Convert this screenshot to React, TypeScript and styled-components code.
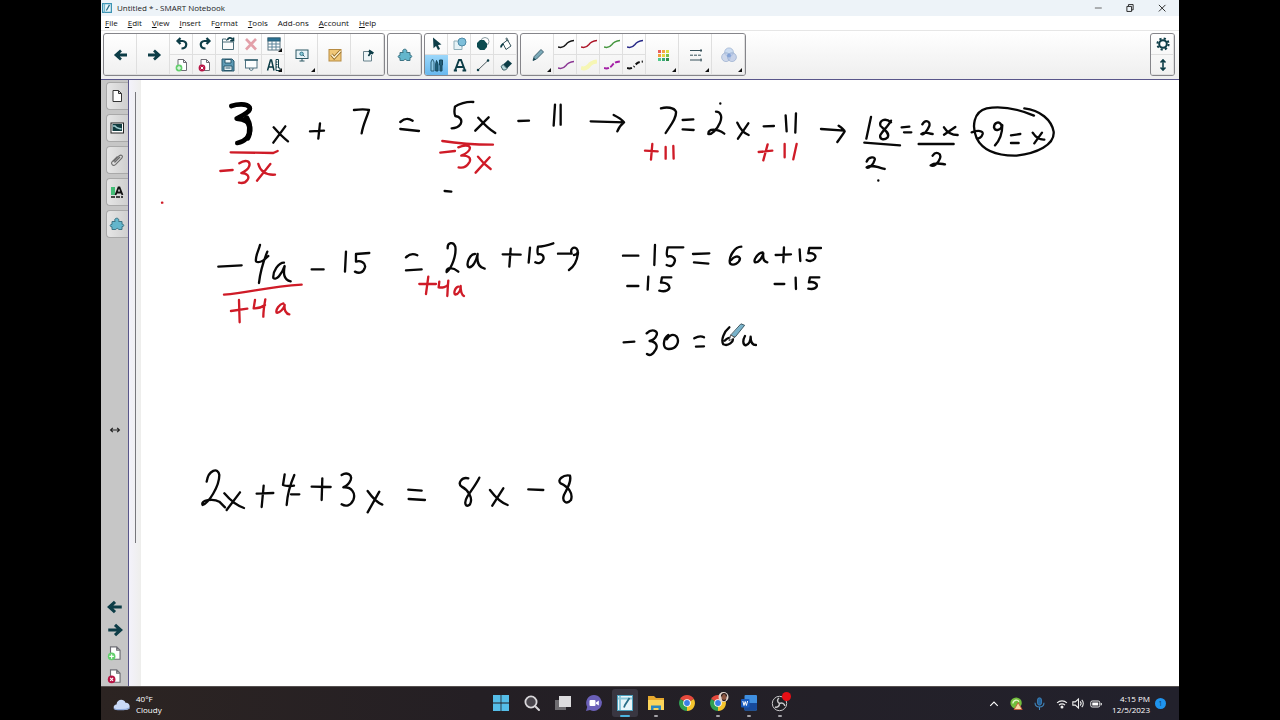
import React from 'react';
import styled, { createGlobalStyle } from 'styled-components';

const GlobalStyle = createGlobalStyle`
  *, *::before, *::after { box-sizing: border-box; }
  body { margin: 0; background: #000; font-family: "Open Sans", "Noto Sans", sans-serif; }
  button { font: inherit; color: inherit; margin: 0; padding: 0; border: 0; background: none; }
`;

const teal = '#0d3d47';

const Desktop = styled.div`
  display: flex;
  flex-direction: column;
  min-height: 100vh;
  margin: 0 101px;
  background: #fff;
`;

/* ---------- window chrome ---------- */

const TitleBar = styled.header`
  display: flex;
  align-items: center;
  height: 16px;
  padding: 0 1px;
  gap: 5px;
  background: #edf3f8;
`;

const Title = styled.h1`
  flex: 1;
  margin: 0;
  font-size: 8px;
  line-height: 16px;
  font-weight: 400;
  color: #1c1c1c;
`;

const WindowControls = styled.div`
  display: flex;
`;

const WindowButton = styled.button`
  display: flex;
  align-items: center;
  justify-content: center;
  width: 32px;
  height: 14px;
`;

const MenuBar = styled.nav`
  display: flex;
  height: 14px;
  padding: 0 4px;
  gap: 10px;
`;

const MenuItem = styled.button`
  font-size: 8px;
  line-height: 14px;
  color: #111;
  u { text-underline-offset: 1px; }
`;

/* ---------- toolbar ---------- */

const Toolbar = styled.div`
  display: flex;
  align-items: flex-start;
  gap: 2px;
  height: 50px;
  padding: 2px 4px 0 2px;
  border-top: 1px solid #e6e6e6;
  border-bottom: 1px solid #59568a;
  background: linear-gradient(#ffffff, #eeeeee);
`;

const ToolGroup = styled.div<{ $end?: boolean }>`
  display: flex;
  height: 43px;
  margin-left: ${p => (p.$end ? 'auto' : '0')};
  border: 1px solid #85858a;
  border-radius: 3px;
  background: linear-gradient(#ffffff, #f0f0f0);
  overflow: hidden;
`;

const SmallTools = styled.div<{ $columns: number }>`
  display: grid;
  grid-template-columns: repeat(${p => p.$columns}, 23px);
  grid-auto-rows: 1fr;
`;

const ToolButton = styled.button<{ $large?: boolean; $active?: boolean }>`
  position: relative;
  display: flex;
  align-items: center;
  justify-content: center;
  width: ${p => (p.$large ? '33px' : '23px')};
  background: ${p => (p.$active ? 'linear-gradient(#9bd7fa, #69b9ee)' : 'transparent')};
  box-shadow: ${p => (p.$active ? 'none' : 'inset -1px -1px #dfdfdf')};
`;

const Corner = styled.span`
  position: absolute;
  right: 3px;
  bottom: 3px;
  border: 2px solid #111;
  border-top-color: transparent;
  border-left-color: transparent;
`;

/* ---------- workspace ---------- */

const Workspace = styled.main`
  display: flex;
  flex: 1;
`;

const Sidebar = styled.aside`
  display: flex;
  flex-direction: column;
  width: 28px;
  padding: 2px 0 0;
  border-right: 1px solid #59568a;
  background: #c6c6c6;
`;

const Tabs = styled.div`
  display: flex;
  flex-direction: column;
  gap: 4px;
  padding-left: 5px;
`;

const Tab = styled.button`
  display: flex;
  align-items: center;
  justify-content: center;
  height: 28px;
  padding-right: 2px;
  border: 1px solid #a9a9a9;
  border-right: 0;
  border-radius: 4px 0 0 4px;
  background: linear-gradient(90deg, #e6e6e6, #cfcfcf);
`;

const ResizeArea = styled.div`
  display: flex;
  flex: 1;
  align-items: center;
  justify-content: center;
  padding-top: 25px;
`;

const PageNav = styled.div`
  display: flex;
  flex-direction: column;
  gap: 3px;
`;

const NavButton = styled.button`
  display: flex;
  align-items: center;
  justify-content: center;
  height: 20px;
`;

const PageEdge = styled.div`
  width: 12px;
  padding: 12px 5px 0 6px;
  background: linear-gradient(90deg, #f3f2fb, #eeeeec);
`;

const EdgeLine = styled.div`
  height: 76%;
  background: #77777c;
`;

const Page = styled.section`
  flex: 1;
  min-width: 0;
  background: #fff;
`;

const Ink = styled.svg`
  display: block;
  width: 100%;
  fill: none;
  stroke-linecap: round;
  stroke-linejoin: round;
`;

/* ---------- taskbar ---------- */

const Taskbar = styled.footer`
  display: grid;
  grid-template-columns: 1fr auto 1fr;
  height: 34px;
  color: #fff;
  border-top: 1px solid #55504f;
  background: linear-gradient(90deg, #2c2422, #241f24 35%, #22212c);
`;

const Weather = styled.button`
  display: flex;
  align-items: center;
  justify-self: start;
  gap: 4px;
  padding-left: 11px;
  text-align: left;
`;

const TwoLines = styled.span`
  display: flex;
  flex-direction: column;
  font-size: 8px;
  line-height: 11px;
`;

const Apps = styled.div`
  display: flex;
  gap: 5px;
`;

const AppButton = styled.button<{ $state?: 'open' | 'active' }>`
  position: relative;
  display: flex;
  align-items: center;
  justify-content: center;
  width: 26px;
  height: 28px;
  margin-top: 2px;
  border-radius: 3px;
  background: ${p => (p.$state === 'active' ? '#393641' : 'transparent')};
  &::after {
    content: "";
    position: absolute;
    bottom: 0;
    width: ${p => (p.$state === 'active' ? '10px' : '4px')};
    height: ${p => (p.$state ? '2px' : '0')};
    border-radius: 1px;
    background: ${p => (p.$state === 'active' ? '#4cb4e0' : '#a5a3a8')};
  }
`;

const Tray = styled.div`
  display: flex;
  align-items: center;
  justify-content: flex-end;
  padding-right: 13px;
`;

const TrayButton = styled.button<{ $narrow?: boolean }>`
  display: flex;
  align-items: center;
  justify-content: center;
  width: ${p => (p.$narrow ? '17px' : '23px')};
  height: 24px;
`;

const QuickSettings = styled.div`
  display: flex;
  margin-left: 2px;
`;

const Clock = styled.button`
  width: 46px;
  text-align: right;
`;

const Badge = styled.span`
  width: 11px;
  height: 11px;
  margin-left: 5px;
  border-radius: 50%;
  font-size: 7px;
  line-height: 11px;
  text-align: center;
  color: #0c3a66;
  background: #1f94ee;
`;

/* ---------- icons ---------- */

type IconProps = { size?: number; children: React.ReactNode };
const Icon = ({ size = 16, children }: IconProps) => (
  <svg width={size} height={size} viewBox="0 0 16 16" fill="none" stroke={teal} aria-hidden="true">
    {children}
  </svg>
);

const ArrowShape = ({ right }: { right?: boolean }) => (
  <path
    d={right ? 'M2 8H12M8 3.5L13 8L8 12.5' : 'M14 8H4M8 3.5L3 8L8 12.5'}
    strokeWidth="2.8"
  />
);

const pageOutline = 'M4 2.5H9.5L12.5 5.5V13.5H4ZM9.5 2.5V5.5H12.5';
const puzzle =
  'M3 5.5H6.2C5 3.6 6.2 2.2 7.8 2.2S10.4 3.6 9.6 5.5H13V8.3C15 7.6 15.6 11 13 10.6V13.5H9.7C9.6 12 7 12 6.8 13.5H3V10.8C.6 11.4.6 7.8 3 8.4Z';

const icons: Record<string, React.ReactNode> = {
  back: <ArrowShape />,
  forward: <ArrowShape right />,
  undo: <path d="M6.5 2L3.5 5L6.5 8M4 5H8.5C13.8 5 13.5 12.5 7.5 12.5" strokeWidth="2.2" />,
  redo: <path d="M9.5 2L12.5 5L9.5 8M12 5H7.5C2.2 5 2.5 12.5 8.5 12.5" strokeWidth="2.2" />,
  open: (
    <>
      <path d="M2.5 13.5V3H6L7 5M2.5 6H13.5V13.5H2.5" stroke="#4d6f7a" />
      <path d="M7.5 4C8 1.5 11 1 12.5 3.5M13.5 1.5V4.8H10.2" strokeWidth="1.6" />
    </>
  ),
  del: <path d="M3 3L13 13.5M13 3L3 13.5" stroke="#e3a0a9" strokeWidth="2.6" />,
  table: (
    <>
      <rect x="2" y="2" width="12" height="12" fill="#fff" stroke="#5a7480" />
      <rect x="2" y="2" width="12" height="3" fill="#2c7396" stroke="#2c6177" />
      <path d="M2 8H14M2 11H14M6 5V14M10 5V14" stroke="#5d8499" />
    </>
  ),
  addPage: (
    <>
      <path d={pageOutline} fill="#fff" stroke="#6d6d74" />
      <circle cx="5" cy="11" r="3.4" fill="#63cf6d" stroke="none" />
      <path d="M5 9V13M3 11H7" stroke="#fff" />
    </>
  ),
  removePage: (
    <>
      <path d={pageOutline} fill="#fff" stroke="#6d6d74" />
      <circle cx="5" cy="11" r="3.4" fill="#b91545" stroke="none" />
      <path d="M3.7 9.7L6.3 12.3M6.3 9.7L3.7 12.3" stroke="#fff" />
    </>
  ),
  save: (
    <>
      <path d="M2 2H12L14 4V14H2Z" fill="#5d9ab5" stroke="#28586c" />
      <path d="M5 2.5H11V6H5ZM4 9H12V13.5H4Z" fill="#e9f3f7" stroke="#28586c" />
      <path d="M5.5 11H10.5" stroke="#28586c" />
    </>
  ),
  shade: (
    <>
      <rect x="2.5" y="3" width="11.5" height="8" fill="#fbfdfe" stroke="#507382" />
      <path d="M1.5 3H15" stroke="#35616f" strokeWidth="1.6" />
      <path d="M6.5 11V12.5L8.2 13.5L10 12.5V11" stroke="#507382" />
    </>
  ),
  measure: (
    <>
      <path d="M1.5 13.5L4.5 3H5.5L8 13.5M3 10H7" strokeWidth="1.5" />
      <path d="M10 2.5H12.5V11H14V13.5H10ZM10 5H11.5M10 7.5H11.5M10 10H11.5" fill="#fff" />
    </>
  ),
  screen: (
    <>
      <rect x="2" y="3" width="12" height="8.5" fill="#e7f3f7" stroke="#2d5965" />
      <circle cx="7.6" cy="6.8" r="1.7" fill="#8ccbda" stroke="#34778a" />
      <path d="M9 8L10.5 9.5M8 11.5V14M5.5 14H10.5" stroke="#2d5965" />
    </>
  ),
  check: (
    <>
      <rect x="2" y="2.5" width="12" height="11.5" fill="#f0c777" stroke="#b78b42" />
      <path d="M4.5 7.5L7.2 10.8L13.5 4" stroke="#8c6420" strokeWidth="3" />
      <path d="M4.5 7.5L7.2 10.8L13.5 4" stroke="#fff3d2" strokeWidth="1.4" />
    </>
  ),
  popout: (
    <>
      <path d="M9 4.5H3.5V14H11.5V8" fill="#eef6f8" stroke="#66808a" />
      <path d="M9.5 2.5L14 5.5L12.5 7.5L11 7L9 9.5L7.8 8.4L9.3 6L8.3 4.6Z" fill={teal} stroke="none" />
    </>
  ),
  addon: <path d={puzzle} fill="#63b6cc" stroke="#3f7585" />,
  select: <path d="M4 1.5L12.5 8.5L9 9L11 13L9 14L7 10L4.5 12.3Z" fill={teal} stroke="none" />,
  shapes: (
    <>
      <path d="M2 5H10V13.5H2Z" fill="#e5f2f6" stroke="#90aeb8" />
      <circle cx="10" cy="6" r="4" fill="#7ebfda" stroke="#4e8ba7" />
    </>
  ),
  polygon: (
    <>
      <circle cx="10" cy="5.5" r="4" fill="#fff" stroke="#8a9da3" />
      <path d="M5 4H9L12 7.5V11L9.5 14H5L2 11V7Z" fill="#0b4b50" stroke="none" />
    </>
  ),
  fill: (
    <>
      <path d="M5 7.5L9.5 4L13 10L8 13.5ZM9 5C7 1.5 9 0 10.2 5.5" fill="#fff" stroke="#34535b" />
      <path d="M5 7C2.5 8.5 1.5 10.8 3 12C4.5 11 4.3 9 6 8.5" fill={teal} stroke="none" />
    </>
  ),
  pens: (
    <>
      <path d="M2 14V5L3.5 2L5 5V14Z" fill="#8cc8e6" stroke="#2c6079" />
      <path d="M6.7 14V7L7.5 3.5L9 7V14Z" fill="#1d6482" stroke="#17465a" />
      <path d="M11 14V8H10.5V3H13.5V8H13V14Z" fill="#235f78" stroke="#17465a" />
    </>
  ),
  textTool: <path d="M3 13.5L7 3H9L13 13.5M5 10H11M1.8 13.5H5M10.5 13.5H14.2" strokeWidth="1.9" />,
  line: (
    <>
      <path d="M3 13L13 3.5" stroke="#4f5c61" />
      <path d="M3 13H3.1M13 3.5H13.1" strokeWidth="2.5" strokeLinecap="round" />
    </>
  ),
  eraser: (
    <>
      <path d="M3 9.5L10 3L14 6.5L7.5 13H5Z" fill={teal} stroke="none" />
      <path d="M3 9.5L5.2 7.5L9 11.5L7.5 13H5Z" fill="#b9d9dd" stroke="#46676d" />
    </>
  ),
  pencil: (
    <>
      <path d="M3 13.5L4.2 9.5L11 2.5L13.5 5L6.5 12Z" fill="#7aa9b8" stroke="#416472" />
      <path d="M3 13.5L3.8 10.8L5.8 12.6Z" fill={teal} stroke="none" />
    </>
  ),
  palette: (
    <g stroke="none">
      {['#e8605c', '#f5a242', '#d9dc45', '#f0a03c', '#e8d33e', '#7cc04a', '#52c98a', '#38a877', '#2f8f4c'].map(
        (c, i) => (
          <rect key={c} x={3 + (i % 3) * 4} y={3 + Math.floor(i / 3) * 4} width="3" height="3" fill={c} />
        ),
      )}
    </g>
  ),
  lines: (
    <>
      <path d="M2 3.5H14M2 13H14" stroke="#36515a" />
      <path d="M2 8.2H14" stroke="#36515a" strokeDasharray="3 1" />
      <path d="M13 2V5M13 11.5V14.5" stroke="#36515a" />
    </>
  ),
  blend: (
    <g stroke="#8fa6c9" fillOpacity=".7" strokeWidth=".6">
      <circle cx="8" cy="5.3" r="4.4" fill="#b9d0ee" />
      <circle cx="5" cy="10.2" r="4.4" fill="#bccbe5" />
      <circle cx="11" cy="10.2" r="4.4" fill="#b3c3e4" />
      <circle cx="8" cy="8.5" r="2" fill="#7398d4" stroke="none" />
    </g>
  ),
  gear: (
    <>
      <circle cx="8" cy="8" r="3.8" strokeWidth="2" />
      <circle cx="8" cy="8" r="5.6" strokeWidth="2" strokeDasharray="2.2 2.2" />
    </>
  ),
  upDown: <path d="M8 3V13M5.5 5.5L8 3L10.5 5.5M5.5 10.5L8 13L10.5 10.5" strokeWidth="1.6" />,
  leftRight: <path d="M3 8H13M5.5 5.5L3 8L5.5 10.5M10.5 5.5L13 8L10.5 10.5" stroke="#222" strokeWidth="1.4" />,
  pageTab: <path d={pageOutline} fill="#fff" stroke="#333" />,
  gallery: (
    <>
      <rect x="2" y="3" width="12.5" height="10" fill="#fff" stroke="#222" />
      <rect x="3.5" y="4" width="9.5" height="7" fill="#103b3f" stroke="none" />
      <path d="M4 6H6C8 9 10 8 12.5 9" stroke="#9cc9cd" strokeWidth="1.4" />
    </>
  ),
  clip: (
    <path
      d="M4.5 9.5L10.3 3.7C12.5 2 14.5 4.5 12.8 6.2L6.5 12.6C3.8 14.6 1.4 11.5 3.2 9.6L8.5 4.5M5.5 10.5L11 5"
      stroke="#6c6c6c"
      strokeWidth="1.1"
    />
  ),
  textTab: (
    <>
      <path d="M2 3H6V11H2Z" fill="#43bd76" stroke="none" />
      <path d="M6.5 11L9.5 3.5H10.5L13.5 11M8 8.5H12" stroke="#111" strokeWidth="1.8" />
      <path d="M2 13H14" stroke="#111" strokeWidth="1.4" strokeDasharray="4 1" />
    </>
  ),
};

const inkSwatches = [
  { label: 'Black pen', color: '#161616' },
  { label: 'Red pen', color: '#ad1629' },
  { label: 'Green pen', color: '#46963f' },
  { label: 'Blue pen', color: '#272987' },
  { label: 'Purple pen', color: '#8b3794' },
  { label: 'Yellow highlighter', color: '#f6f6b4', width: 4 },
  { label: 'Magenta dashed pen', color: '#a41ea6', width: 2, dash: '5 1.5' },
  { label: 'Black dashed pen', color: '#111', width: 2, dash: '5 2 1 2' },
];

type ToolProps = { icon: string; label: string; large?: boolean; active?: boolean; menu?: boolean };
const Tool = ({ icon, label, large, active, menu }: ToolProps) => (
  <ToolButton type="button" aria-label={label} $large={large} $active={active}>
    <Icon>{icons[icon]}</Icon>
    {menu && <Corner />}
  </ToolButton>
);

const fileTools: ToolProps[] = [
  { icon: 'undo', label: 'Undo' },
  { icon: 'redo', label: 'Redo' },
  { icon: 'open', label: 'Open' },
  { icon: 'del', label: 'Delete' },
  { icon: 'table', label: 'Insert table', menu: true },
  { icon: 'addPage', label: 'Add page' },
  { icon: 'removePage', label: 'Delete page' },
  { icon: 'save', label: 'Save' },
  { icon: 'shade', label: 'Screen shade' },
  { icon: 'measure', label: 'Measurement tools', menu: true },
];

const drawTools: ToolProps[] = [
  { icon: 'select', label: 'Select' },
  { icon: 'shapes', label: 'Shapes' },
  { icon: 'polygon', label: 'Regular polygons' },
  { icon: 'fill', label: 'Fill' },
  { icon: 'pens', label: 'Pens', active: true },
  { icon: 'textTool', label: 'Text' },
  { icon: 'line', label: 'Lines' },
  { icon: 'eraser', label: 'Eraser' },
];

const menus = [
  ['', 'F', 'ile'],
  ['', 'E', 'dit'],
  ['', 'V', 'iew'],
  ['', 'I', 'nsert'],
  ['F', 'o', 'rmat'],
  ['', 'T', 'ools'],
  ['Add-ons', '', ''],
  ['', 'A', 'ccount'],
  ['', 'H', 'elp'],
];

/* ---------- pen strokes on the page ---------- */

type Board = { x: number; y: number; black: string; red?: string };

/* Stroke coordinates are thirds of a pixel, measured from each board's corner. */
const boards: Board[] = [
  {
    x: 150,
    y: 90,
    black: `M371 112C385 128 398 142 414 154M406 109L370 158
      M480 124L522 122M510 100L505 146
      M612 60C630 58 648 58 657 60C652 80 640 100 635 130
      M751 96C765 84 775 84 788 92M751 117L807 123
      M970 36C950 34 925 42 915 50C913 60 912 70 916 78C930 80 938 90 932 102C925 112 915 115 905 115
      M985 83C1000 100 1018 118 1036 129M1016 82L976 122
      M884 303L904 305
      M205 530L275 526
      M330 465C325 485 315 500 318 514C328 522 345 508 355 498M352 485C340 515 330 550 327 579
      M402 518C385 518 368 545 370 564C378 572 395 555 404 528C400 548 400 570 422 574
      M485 538L521 538M588 485L585 545
      M658 489L618 492L618 515C632 510 648 520 645 532C640 548 628 552 615 545
      M768 502C780 490 790 490 802 496M768 541L815 538
      M893 475C892 458 910 453 916 470C920 495 905 535 890 546C888 530 910 532 925 545
      M975 492C960 492 948 520 955 531C968 536 980 510 983 492C980 515 985 532 1004 536`,
    red: `M242 187L370 189L383 183
      M211 243L248 240
      M268 220C285 208 302 212 298 228C294 240 282 246 274 249C292 250 300 260 292 270C285 280 275 280 267 278
      M325 222C330 240 345 256 375 254M361 222L321 272
      M877 153C920 160 970 164 1029 164
      M871 188L915 183
      M925 172C940 165 958 165 960 173C960 185 945 192 934 197C955 195 965 205 958 217C950 230 938 235 926 232
      M984 200C995 215 1010 228 1022 237M1019 202L977 248
      M36 338L37 338
      M222 614C300 608 350 590 455 584
      M243 663L292 656M267 630L269 697
      M315 630L311 655C325 656 338 650 345 645M346 628C343 645 340 660 340 680
      M400 640C388 642 376 660 380 668C390 670 402 655 404 645C402 660 408 672 418 673
      M808 582L858 582M835 560L828 612
      M868 575L866 592C878 594 890 590 893 585M895 572C893 590 893 605 892 618
      M925 590C915 592 910 610 916 614C926 612 932 600 932 588C932 605 936 615 942 618`,
  },
  {
    x: 500,
    y: 90,
    black: `M55 93L87 92M165 44L161 107M182 44L182 104
      M272 94L372 97M341 75C355 82 365 88 372 97C362 105 356 112 352 124
      M483 55C500 50 522 52 528 65C530 85 512 105 497 129
      M548 90L580 88M548 118L581 120
      M648 65C662 65 668 80 660 98C650 120 635 135 625 132C625 115 650 115 673 131M661 41L661 40
      M712 98C720 115 732 130 746 135M745 100L714 146
      M791 109L822 108M857 76L860 124M888 70L886 128
      M8 493L62 494M32 476L28 530
      M90 473L86 518
      M160 460C145 465 130 470 114 470C112 480 112 488 114 493C125 490 133 498 130 508C125 520 115 522 106 517
      M174 491L215 491C210 478 220 468 230 476C238 485 230 495 222 495M234 488C232 510 222 530 207 540
      M369 497L415 497M465 465L463 525
      M550 472L503 472C500 485 498 495 503 500C515 495 528 505 524 515C520 530 510 530 500 525
      M579 492L628 490M582 517L625 521
      M724 470C705 470 685 500 690 520C700 530 720 518 720 505C716 495 700 500 694 510
      M788 487C772 490 760 510 765 517C778 518 788 500 790 490C788 505 792 515 802 517
      M827 495L873 493M852 472L850 517M899 478L901 513
      M963 474L928 474L925 490C940 488 950 495 945 505C938 515 930 515 920 510
      M382 588L415 588M445 560L443 599
      M514 562L486 562L483 578C498 576 510 585 508 595C502 605 490 605 478 602
      M824 582L853 582M887 563L888 597
      M958 562L930 562L927 577C940 574 954 580 950 590C945 598 935 598 925 596
      M371 757L403 755
      M440 730C455 715 475 722 470 735C465 750 455 752 449 753C470 755 475 770 465 782C458 795 450 798 441 792
      M505 735C490 745 485 775 505 777C530 778 540 755 530 740C520 730 508 735 500 748
      M583 745C595 738 605 738 612 742M588 770L612 769
      M688 712C672 725 662 750 670 763C685 770 702 755 698 745C690 740 680 745 674 752
      M735 738C728 750 728 764 737 766C748 762 752 750 752 740C752 755 756 765 768 765`,
    red: `M435 182L473 184M457 162L453 209M497 171L497 206M520 168L521 206
      M776 186L817 182M803 163L790 211M854 162L854 202M890 162L880 208`,
  },
  {
    x: 810,
    y: 90,
    black: `M33 117L103 122M86 107C95 113 102 118 104 124C98 134 90 145 82 156
      M183 81L169 146
      M243 97C225 82 205 92 212 108C225 120 240 130 233 142C222 152 208 148 211 135C220 120 235 108 243 92
      M163 158L270 166
      M170 215C175 200 198 198 194 210C190 225 175 237 170 232C180 222 205 232 224 237M205 271L205 272
      M275 112L298 110M282 127L304 127
      M337 103C345 88 362 92 358 108C352 122 340 138 334 132C345 122 355 132 368 132
      M402 112C410 125 425 135 443 135M436 111L402 134
      M326 162L431 162
      M368 197C378 182 395 190 390 205C385 220 370 232 362 226C375 216 395 222 405 223
      M485 127C505 120 520 122 518 132C515 142 507 146 503 145
      M575 108C570 90 552 98 552 112C556 125 572 122 577 105C577 130 570 150 555 166
      M603 136L631 132M603 159L626 159
      M668 128C678 143 688 150 703 149M696 128L673 160
      M672 77C620 55 570 48 530 55C490 65 485 110 500 145C520 185 570 198 620 197C680 190 735 165 731 125C725 90 690 60 643 55`,
  },
  {
    x: 190,
    y: 455,
    black: `M50 80C55 45 85 35 88 60C88 95 55 145 38 150C30 135 70 130 88 140L105 157
      M103 115C120 135 140 152 162 159M150 112L110 165
      M200 116L250 114M221 92L215 156
      M284 58L279 90C290 95 300 93 312 92M313 60C300 90 292 120 290 150M303 118L328 118
      M365 95L422 96M397 70L395 135
      M455 60C470 50 488 58 482 75C475 92 465 95 460 97C485 95 498 115 490 135C482 152 468 156 455 148
      M533 108C545 125 560 142 577 149M568 110L533 172
      M655 104L695 107M656 132L705 135
      M835 70C815 65 802 85 815 95C835 105 850 130 840 148C828 160 820 145 832 125C845 105 860 85 868 68
      M900 105C915 125 930 142 953 150M940 100L907 152
      M1015 103L1060 105
      M1140 62C1120 58 1100 75 1112 85C1135 95 1150 115 1143 135C1130 150 1115 140 1122 120C1132 100 1145 80 1140 62`,
  },
];

const Handwriting = () => (
  <Ink viewBox="141 80 1038 606" preserveAspectRatio="xMinYMin meet" role="img" aria-label="Handwritten equations">
    {boards.map(b => (
      <g key={`${b.x}-${b.y}`} transform={`translate(${b.x} ${b.y}) scale(.3333)`} strokeWidth="7">
        <path d={b.black} stroke="#080808" />
        {b.red && <path d={b.red} stroke="#cf1b27" />}
      </g>
    ))}
    <g transform="translate(150 90) scale(.3333)" stroke="#000">
      <path d="M244 48C262 42 290 40 299 52C304 64 280 75 260 86C285 88 300 95 300 115C302 138 285 155 262 159" strokeWidth="14" />
      <path d="M290 84C300 100 303 125 293 144" strokeWidth="16" />
    </g>
    <g transform="translate(500 90) scale(.3333)" strokeWidth="3">
      <path d="M724 702L734 706L705 742L693 736Z" fill="#78b2ca" stroke="#3d5964" />
      <path d="M693 736L705 742L688 752Z" fill="#fff" stroke="#555" />
    </g>
  </Ink>
);

/* ---------- taskbar pictures ---------- */

const Chrome = () => (
  <g stroke="none">
    <path d="M8 8L1.1 4A8 8 0 0 1 14.9 4Z" fill="#e5493c" />
    <path d="M8 8L14.9 4A8 8 0 0 1 8 16Z" fill="#f5c52d" />
    <path d="M8 8V16A8 8 0 0 1 1.1 4Z" fill="#31a052" />
    <circle cx="8" cy="8" r="3.8" fill="#fff" />
    <circle cx="8" cy="8" r="2.9" fill="#3b7fe8" />
  </g>
);

const apps: { label: string; state?: 'open' | 'active'; art: React.ReactNode }[] = [
  {
    label: 'Start',
    art: <path d="M0 0H7.6V7.6H0ZM8.4 0H16V7.6H8.4ZM0 8.4H7.6V16H0ZM8.4 8.4H16V16H8.4Z" fill="#55bde8" stroke="none" />,
  },
  {
    label: 'Search',
    art: (
      <>
        <circle cx="7" cy="7" r="5.6" fill="#49454c" stroke="#d9d7da" strokeWidth="1.8" />
        <path d="M11.2 11.2L15 15" stroke="#d9d7da" strokeWidth="2" strokeLinecap="round" />
      </>
    ),
  },
  {
    label: 'Task view',
    art: (
      <g stroke="none">
        <rect x="0" y="5" width="11" height="10" fill="#6e6c70" />
        <rect x="4" y="1" width="12" height="11" fill="#dddcde" />
      </g>
    ),
  },
  {
    label: 'Chat',
    art: (
      <g stroke="none">
        <path d="M8 0A8 8 0 1 1 4 15L0 16L1.2 12A8 8 0 0 1 8 0Z" fill="#6b60b8" />
        <rect x="3.5" y="5" width="6" height="6" rx="1" fill="#fff" />
        <path d="M10 7.5L12.8 5.5V10.5L10 8.7Z" fill="#fff" />
      </g>
    ),
  },
  {
    label: 'SMART Notebook',
    state: 'active',
    art: (
      <>
        <rect x=".5" y=".5" width="15" height="15" fill="#e9f6fa" stroke="#4b9fbd" />
        <path d="M1 3.5H15M3 1V15" stroke="#8cc8da" strokeWidth="2" />
        <path d="M12.5 3L8 10L7 12.5" stroke="#2b6f88" strokeWidth="1.8" />
      </>
    ),
  },
  {
    label: 'File Explorer',
    state: 'open',
    art: (
      <g stroke="none">
        <path d="M0 1H6L8 3H16V15H0Z" fill="#e5a82e" />
        <path d="M0 5H16V15H0Z" fill="#fbd45b" />
        <path d="M3 15V10.5H13V15H10.5V13H5.5V15Z" fill="#2b86bf" />
      </g>
    ),
  },
  { label: 'Chrome', art: <Chrome /> },
  {
    label: 'Chrome, second profile',
    state: 'open',
    art: (
      <>
        <Chrome />
        <circle cx="13.5" cy="2" r="5" fill="#e5d9d2" stroke="none" />
        <ellipse cx="14" cy="2" rx="2.6" ry="3.4" fill="#8d5743" stroke="none" />
        <path d="M11.5 1.5C11.5-2.5 16.5-2.5 16.5 1.5M12.3 4.5C13 6 15 6 15.7 4.5" stroke="#2a1c1a" strokeWidth="1.2" />
      </>
    ),
  },
  {
    label: 'Word',
    state: 'open',
    art: (
      <>
        <rect x="3.5" y="0" width="12.5" height="15.5" rx="1" fill="#3f8fe0" stroke="none" />
        <path d="M3.5 8H16V14.5L15 15.5H3.5Z" fill="#174a9b" stroke="none" />
        <rect x="0" y="4" width="8.5" height="8.5" rx="1" fill="#185abd" stroke="none" />
        <path d="M1.8 6L3 10.5L4.2 6.5L5.4 10.5L6.6 6" stroke="#fff" />
      </>
    ),
  },
  {
    label: 'OBS Studio',
    state: 'open',
    art: (
      <>
        <circle cx="7.5" cy="8.5" r="7.2" fill="#201f24" stroke="#c9c7ca" />
        <path d="M7.5 8.5C5 7 5 4.5 7 3M7.5 8.5C10 7.5 12.5 8.5 12.8 11M7.5 8.5C7.5 11.5 5 13 3 11.8" stroke="#c9c7ca" strokeWidth="1.5" />
        <circle cx="14.5" cy="1.5" r="4.5" fill="#e80f16" stroke="none" />
      </>
    ),
  },
];

const tabs = [
  ['pageTab', 'Page sorter'],
  ['gallery', 'Gallery'],
  ['clip', 'Attachments'],
  ['textTab', 'Properties'],
  ['addon', 'Add-ons'],
];

const pageButtons = [
  ['back', 'Previous page'],
  ['forward', 'Next page'],
  ['addPage', 'Add page'],
  ['removePage', 'Delete page'],
];

export default function App() {
  return (
    <>
      <GlobalStyle />
      <Desktop>
        <TitleBar>
          <Icon size={10}>
            <rect x="1" y="1" width="14" height="14" fill="#e7f5fa" stroke="#3c93b3" strokeWidth="2" />
            <path d="M4 1V15" stroke="#73b9ce" strokeWidth="2" />
            <path d="M12 3L7 12" stroke="#286c86" strokeWidth="2" />
          </Icon>
          <Title>Untitled * - SMART Notebook</Title>
          <WindowControls>
            <WindowButton type="button" aria-label="Minimize">
              <Icon size={10}><path d="M3 8H14" stroke="#555" strokeWidth="1.4" /></Icon>
            </WindowButton>
            <WindowButton type="button" aria-label="Restore">
              <Icon size={10}><path d="M3 5.5H10.5V13.5H3ZM5.5 5V2.5H13V11H11" stroke="#222" strokeWidth="1.5" /></Icon>
            </WindowButton>
            <WindowButton type="button" aria-label="Close">
              <Icon size={10}><path d="M3 3L13.5 13.5M13.5 3L3 13.5" stroke="#222" strokeWidth="1.5" /></Icon>
            </WindowButton>
          </WindowControls>
        </TitleBar>
        <MenuBar aria-label="Main menu">
          {menus.map(([before, key, after]) => (
            <MenuItem type="button" key={before + key + after}>
              {before}
              {key && <u>{key}</u>}
              {after}
            </MenuItem>
          ))}
        </MenuBar>
        <Toolbar role="toolbar" aria-label="Notebook tools">
          <ToolGroup>
            <Tool icon="back" label="Previous page" large />
            <Tool icon="forward" label="Next page" large />
            <SmallTools $columns={5}>
              {fileTools.map(t => <Tool key={t.label} {...t} />)}
            </SmallTools>
            <Tool icon="screen" label="Display" large menu />
            <Tool icon="check" label="Response" large />
            <Tool icon="popout" label="Capture" large />
          </ToolGroup>
          <ToolGroup>
            <Tool icon="addon" label="Add-ons" large />
          </ToolGroup>
          <ToolGroup>
            <SmallTools $columns={4}>
              {drawTools.map(t => <Tool key={t.label} {...t} />)}
            </SmallTools>
          </ToolGroup>
          <ToolGroup>
            <Tool icon="pencil" label="Pen type" large menu />
            <SmallTools $columns={4}>
              {inkSwatches.map(s => (
                <ToolButton type="button" key={s.label} aria-label={s.label}>
                  <Icon>
                    <path
                      d="M0 11C3 12 6 11 8 8.5C10 5.5 12 5 16 4.5"
                      stroke={s.color}
                      strokeWidth={s.width ?? 1.4}
                      strokeDasharray={s.dash}
                    />
                  </Icon>
                </ToolButton>
              ))}
            </SmallTools>
            <Tool icon="palette" label="Color" large menu />
            <Tool icon="lines" label="Line style" large menu />
            <Tool icon="blend" label="Transparency" large menu />
          </ToolGroup>
          <ToolGroup $end>
            <SmallTools $columns={1}>
              <Tool icon="gear" label="Customize toolbar" />
              <Tool icon="upDown" label="Move toolbar" />
            </SmallTools>
          </ToolGroup>
        </Toolbar>
        <Workspace>
          <Sidebar>
            <Tabs>
              {tabs.map(([icon, label]) => (
                <Tab type="button" key={label} aria-label={label}>
                  <Icon>{icons[icon]}</Icon>
                </Tab>
              ))}
            </Tabs>
            <ResizeArea>
              <Icon size={14}>{icons.leftRight}</Icon>
            </ResizeArea>
            <PageNav>
              {pageButtons.map(([icon, label]) => (
                <NavButton type="button" key={label} aria-label={label}>
                  <Icon size={18}>{icons[icon]}</Icon>
                </NavButton>
              ))}
            </PageNav>
          </Sidebar>
          <PageEdge>
            <EdgeLine />
          </PageEdge>
          <Page>
            <Handwriting />
          </Page>
        </Workspace>
        <Taskbar>
          <Weather type="button">
            <Icon size={20}>
              <path
                d="M4 12.5C.5 12.5.6 8.5 3.6 8.3C4 4 9.5 3.5 10.8 7C14.5 6.5 15.5 12.3 12 12.5Z"
                fill="#c9d9f6"
                stroke="none"
              />
              <path d="M1.5 11.5C3 13 11 13 14 11.2" stroke="#8ea9da" />
            </Icon>
            <TwoLines>
              <span>40°F</span>
              <span>Cloudy</span>
            </TwoLines>
          </Weather>
          <Apps>
            {apps.map(a => (
              <AppButton type="button" key={a.label} aria-label={a.label} $state={a.state}>
                <svg width="16" height="16" viewBox="0 0 16 16" fill="none" overflow="visible" aria-hidden="true">
                  {a.art}
                </svg>
              </AppButton>
            ))}
          </Apps>
          <Tray>
            <TrayButton type="button" aria-label="Show hidden icons">
              <Icon size={12}><path d="M3 10.5L8 5.5L13 10.5" stroke="#fff" strokeWidth="1.5" /></Icon>
            </TrayButton>
            <TrayButton type="button" aria-label="SMART status">
              <Icon size={13}>
                <circle cx="7.5" cy="7.5" r="7" fill="#72bd3d" stroke="none" />
                <path d="M3.5 8C4 3 10 3 11 6" stroke="#e5f4c9" strokeWidth="1.6" />
                <path d="M10 7L15 15.5H5Z" fill="#f4d9a5" stroke="#cd4f35" />
              </Icon>
            </TrayButton>
            <TrayButton type="button" aria-label="Microphone in use">
              <Icon size={13}>
                <rect x="5.5" y="1" width="5" height="9" rx="2.5" fill="#26649b" stroke="#4089c2" />
                <path d="M2.5 7C2.5 14 13.5 14 13.5 7M8 12.5V16" stroke="#4089c2" strokeWidth="1.3" />
              </Icon>
            </TrayButton>
            <QuickSettings>
              <TrayButton type="button" aria-label="Wi-Fi" $narrow>
                <Icon size={12}>
                  <path d="M1.5 6.5C5 3 11 3 14.5 6.5M4 9.5C6 7.2 10 7.2 12 9.5" stroke="#eee" strokeWidth="1.5" />
                  <circle cx="8" cy="12" r="2" fill="#eee" stroke="none" />
                </Icon>
              </TrayButton>
              <TrayButton type="button" aria-label="Volume" $narrow>
                <Icon size={13}>
                  <path d="M1 6H4L8 2.5V13.5L4 10H1ZM10 5.5C11.5 7 11.5 9 10 10.5M12 3.5C14.5 6 14.5 10 12 12.5" stroke="#eee" strokeWidth="1.3" />
                </Icon>
              </TrayButton>
              <TrayButton type="button" aria-label="Battery" $narrow>
                <Icon size={12}>
                  <rect x="1" y="4" width="12" height="8" rx="2" stroke="#eee" strokeWidth="1.3" />
                  <rect x="3" y="6" width="8" height="4" fill="#fff" stroke="none" />
                  <path d="M15 6.5V9.5" stroke="#eee" strokeWidth="1.5" />
                </Icon>
              </TrayButton>
            </QuickSettings>
            <Clock type="button">
              <TwoLines>
                <span>4:15 PM</span>
                <span>12/5/2023</span>
              </TwoLines>
            </Clock>
            <Badge>1</Badge>
          </Tray>
        </Taskbar>
      </Desktop>
    </>
  );
}
